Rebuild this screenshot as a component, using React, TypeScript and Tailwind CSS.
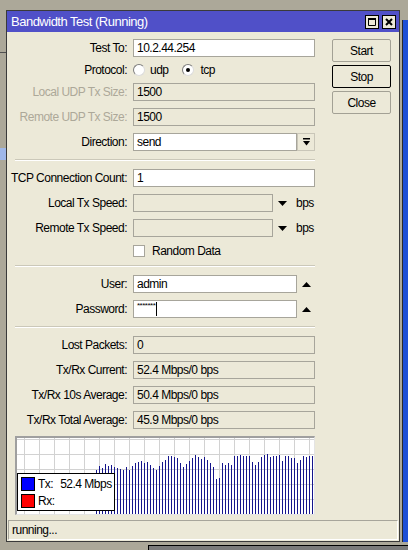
import React from 'react';

// tops of the tx bars (page y), one bar every 3px from x=96
const tops = [
  470, 466, 468, 464, 466, 465, 467, 468, 469, 470, 467, 470, 466, 463, 462, 461, 463, 462, 465, 468,
  470, 466, 462, 460, 456, 456, 457, 458, 463, 467, 464, 461, 458, 455, 457, 459, 457, 460, 463, 467,
  479, 478, 463, 465, 463, 465, 456, 456, 455, 456, 456, 456, 462, 465, 462, 457, 455, 454, 457, 456,
  456, 455, 461, 456, 456, 458, 458, 463, 460, 456, 457, 456, 456,
];

function Label({ children, dim }: { children: React.ReactNode; dim?: boolean }) {
  return (
    <div className={dim ? 'w-[120px] shrink-0 whitespace-nowrap text-right text-[#aca899]' : 'w-[120px] shrink-0 whitespace-nowrap text-right text-black'}>
      {children}
    </div>
  );
}

function Box({ children, white, className }: { children?: React.ReactNode; white?: boolean; className?: string }) {
  return (
    <div
      className={`${className ?? 'w-[182px]'} flex h-[18px] shrink-0 items-center overflow-hidden whitespace-nowrap border border-[#a7a59b] pl-[3px] ${
        white ? 'bg-white' : 'bg-[#ece9d8]'
      }`}
    >
      {children}
    </div>
  );
}

function Row({ label, dim, children }: { label: string; dim?: boolean; children: React.ReactNode }) {
  return (
    <div className="flex h-[18px] items-center">
      <Label dim={dim}>{label}</Label>
      <div className="ml-[6px] flex items-center">{children}</div>
    </div>
  );
}

function Sep() {
  return <div className="my-[1px] ml-[8px] h-[2px] w-[300px] border-t border-b border-t-[#cbc8b9] border-b-white" />;
}

function DownTri() {
  return (
    <svg width="9" height="5" viewBox="0 0 9 5" className="ml-[5px]">
      <path d="M0 0H9L4.5 5Z" fill="#000" />
    </svg>
  );
}

function UpTri() {
  return (
    <svg width="9" height="5" viewBox="0 0 9 5" className="ml-[5px]">
      <path d="M0 5H9L4.5 0Z" fill="#000" />
    </svg>
  );
}

function Radio({ checked }: { checked?: boolean }) {
  return (
    <div className="flex h-[12px] w-[12px] items-center justify-center rounded-full border border-t-[#7d7d7d] border-l-[#7d7d7d] border-r-[#dcdcdc] border-b-[#dcdcdc] bg-white">
      {checked && <div className="h-[4px] w-[4px] rounded-full bg-black" />}
    </div>
  );
}

function Btn({ children, focus }: { children: React.ReactNode; focus?: boolean }) {
  return (
    <div
      className={`flex h-[23px] w-[59px] items-center justify-center rounded-[2px] border bg-[#ece9d8] ${
        focus ? 'border-black' : 'border-[#a3a195]'
      }`}
    >
      {children}
    </div>
  );
}

function Graph() {
  const vx = [7, 22, 37, 52, 67, 82, 97, 112, 127, 142, 157, 172, 187, 202, 217, 232, 247, 262, 277, 292];
  const hy = [1, 16, 31, 46, 61];
  return (
    <div className="relative ml-[8px] h-[79px] w-[300px] border-t-2 border-l-2 border-r border-b border-t-[#9f9f9f] border-l-[#9f9f9f] border-r-[#e4e4e4] border-b-[#e4e4e4] bg-white">
      <svg width="297" height="76" viewBox="0 0 297 76" className="block">
        {vx.map((x) => (
          <rect key={'v' + x} x={x} y={0} width={1} height={76} fill="#d2d2d2" />
        ))}
        {hy.map((y) => (
          <rect key={'h' + y} x={0} y={y} width={297} height={1} fill="#d2d2d2" />
        ))}
        {tops.map((t, i) => (
          <rect key={i} x={96 + i * 3 - 17} y={t - 438} width={1} height={76 - (t - 438)} fill="#15158c" />
        ))}
      </svg>
      <div className="absolute left-[0px] top-[35px] flex h-[38px] w-[98px] flex-col gap-[3px] whitespace-nowrap border border-black bg-white px-[3px] pt-[3px]">
        <div className="flex h-[14px] items-center">
          <div className="h-[14px] w-[14px] shrink-0 border border-black bg-[#0000ff]" />
          <span className="ml-[3px]">Tx:</span>
          <span className="ml-[7px]">52.4 Mbps</span>
        </div>
        <div className="flex h-[14px] items-center">
          <div className="h-[14px] w-[14px] shrink-0 border border-black bg-[#ff0000]" />
          <span className="ml-[3px]">Rx:</span>
        </div>
      </div>
    </div>
  );
}

export default function App() {
  return (
    <div className="relative h-[550px] w-[408px] overflow-hidden bg-[#aca899] pl-[6px] pt-[10px] font-['Liberation_Sans',Arial,sans-serif] text-[12px] leading-[16px] tracking-[-0.5px] text-black">
      {/* windows behind */}
      <div className="absolute left-[402px] top-[20px] h-[522px] w-[6px] border-l border-[#2a2a2a] bg-[#1d4fd6]" />
      <div className="absolute left-[0px] top-[52px] h-[1px] w-[6px] bg-[#505050]" />
      <div className="absolute left-[0px] top-[148px] h-[12px] w-[6px] bg-[#9fb7e8]" />
      <div className="absolute left-[148px] top-[545px] h-[5px] w-[260px] border-t border-l border-black bg-[#7b7b7b]" />

      {/* window */}
      <div className="flex h-[532px] w-[394px] flex-col border border-[#3a3a3a] bg-[#ece9d8]">
        <div className="flex h-[21px] shrink-0 items-center bg-[#5050c8] pl-[4px] pr-[3px] text-[13px] text-white">
          <span>Bandwidth Test (Running)</span>
          <div className="ml-auto flex gap-[3px]">
            <div className="flex h-[14px] w-[14px] items-center justify-center border border-black bg-[#ece9d8]">
              <svg width="8" height="8" viewBox="0 0 8 8">
                <path d="M0.5 0.5H7.5V7.5H0.5Z" fill="none" stroke="#000" />
                <rect x="0" y="0" width="8" height="2" fill="#000" />
              </svg>
            </div>
            <div className="flex h-[14px] w-[14px] items-center justify-center border border-black bg-[#ece9d8]">
              <svg width="8" height="8" viewBox="0 0 8 8">
                <path d="M1 1L7 7M7 1L1 7" stroke="#000" strokeWidth="2" />
              </svg>
            </div>
          </div>
        </div>

        <div className="flex">
          <div className="flex w-[308px] flex-col gap-[7px] pt-[7px]">
            <Row label="Test To:">
              <Box white>10.2.44.254</Box>
            </Row>
            <div className="flex h-[12px] items-center">
              <Label>Protocol:</Label>
              <div className="ml-[6px] flex items-center">
                <Radio />
                <span className="ml-[5px]">udp</span>
                <div className="ml-[13px]">
                  <Radio checked />
                </div>
                <span className="ml-[7px]">tcp</span>
              </div>
            </div>
            <Row label="Local UDP Tx Size:" dim>
              <Box>1500</Box>
            </Row>
            <Row label="Remote UDP Tx Size:" dim>
              <Box>1500</Box>
            </Row>
            <Row label="Direction:">
              <Box white className="w-[164px]">send</Box>
              <div className="flex h-[18px] w-[18px] items-center justify-center border border-[#c9c6b8] bg-[#ece9d8]">
                <svg width="7" height="8" viewBox="0 0 7 8">
                  <rect x="0" y="0" width="7" height="1.5" fill="#000" />
                  <path d="M0 3H7L3.5 7.5Z" fill="#000" />
                </svg>
              </div>
            </Row>
            <Sep />
            <Row label="TCP Connection Count:">
              <Box white>1</Box>
            </Row>
            <Row label="Local Tx Speed:">
              <Box className="w-[140px]" />
              <DownTri />
              <span className="ml-[9px]">bps</span>
            </Row>
            <Row label="Remote Tx Speed:">
              <Box className="w-[140px]" />
              <DownTri />
              <span className="ml-[9px]">bps</span>
            </Row>
            <div className="flex h-[13px] items-center">
              <div className="ml-[126px] h-[12px] w-[12px] border border-[#a7a59b] bg-white" />
              <span className="ml-[7px]">Random Data</span>
            </div>
            <Sep />
            <Row label="User:">
              <Box white className="w-[164px]">admin</Box>
              <UpTri />
            </Row>
            <Row label="Password:">
              <Box white className="w-[164px]">
                <span className="self-start text-[8px] leading-[10px]">*******</span>
                <span className="ml-[1px] h-[14px] w-[1px] bg-black" />
              </Box>
              <UpTri />
            </Row>
            <Sep />
            <Row label="Lost Packets:">
              <Box>0</Box>
            </Row>
            <Row label="Tx/Rx Current:">
              <Box>52.4 Mbps/0 bps</Box>
            </Row>
            <Row label="Tx/Rx 10s Average:">
              <Box>50.4 Mbps/0 bps</Box>
            </Row>
            <Row label="Tx/Rx Total Average:">
              <Box>45.9 Mbps/0 bps</Box>
            </Row>
            <Graph />
          </div>

          <div className="ml-[17px] flex flex-col gap-[3px] pt-[7px]">
            <Btn>Start</Btn>
            <Btn focus>Stop</Btn>
            <Btn>Close</Btn>
          </div>
        </div>

        <div className="mx-[1px] mt-[5px] flex h-[20px] items-center border border-t-[#a7a59b] border-l-[#a7a59b] border-r-white border-b-white pl-[3px]">
          running...
        </div>
      </div>
    </div>
  );
}
